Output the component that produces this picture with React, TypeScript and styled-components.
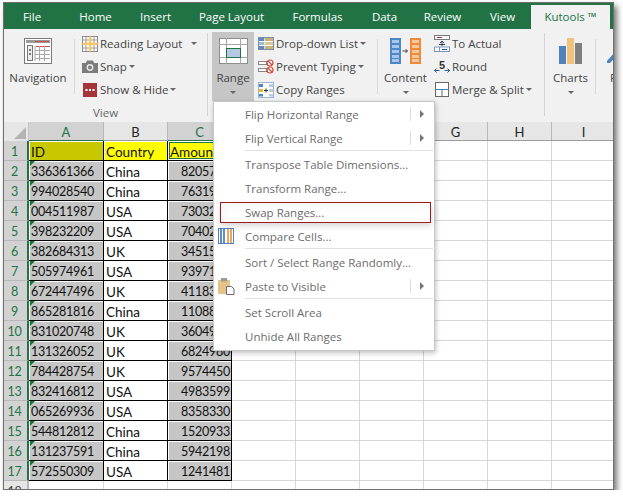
import React from "react";
import styled, { createGlobalStyle } from "styled-components";

const GlobalStyle = createGlobalStyle`
  html, body { margin: 0; padding: 0; background: #fff; }
  * { box-sizing: border-box; }
`;

const UI_FONT = `"Open Sans", "Liberation Sans", sans-serif`;
const CELL_FONT = `Lato, "Liberation Sans", sans-serif`;
const GREEN = "#217346";

const Win = styled.div`
  position: relative;
  margin: 2px 0 0 3px;
  width: 611px;
  height: 488px;
  border: 1px solid #6f6f6f;
  background: #fff;
  box-shadow: 3px 4px 6px rgba(0, 0, 0, 0.55);
  font-family: ${UI_FONT};
`;

const TabBar = styled.div`
  display: flex;
  height: 26px;
  background: ${GREEN};
  overflow: hidden;
`;

const Tab = styled.div<{ $w: number; $ml?: number; $active?: boolean }>`
  width: ${(p) => p.$w}px;
  margin-left: ${(p) => p.$ml ?? 0}px;
  margin-top: ${(p) => (p.$active ? 2 : 0)}px;
  display: flex;
  align-items: center;
  justify-content: center;
  font-size: 11.5px;
  padding-bottom: ${(p) => (p.$active ? 2 : 0)}px;
  color: ${(p) => (p.$active ? GREEN : "#fff")};
  background: ${(p) => (p.$active ? "#f1f1f1" : "transparent")};
  white-space: nowrap;
`;

const Ribbon = styled.div`
  display: flex;
  height: 93px;
  background: #f1f1f1;
  color: #444;
  font-size: 11.5px;
  overflow: hidden;
`;

const Group = styled.div<{ $w: number }>`
  flex: none;
  width: ${(p) => p.$w}px;
  display: flex;
  flex-direction: column;
  padding-top: 3px;
`;

const Controls = styled.div`
  display: flex;
  height: 69px;
`;

const GroupLabel = styled.div`
  margin-top: 4px;
  height: 16px;
  line-height: 16px;
  text-align: center;
  color: #666;
`;

const GroupDivider = styled.div`
  flex: none;
  width: 1px;
  height: 83px;
  margin-top: 4px;
  background: #d4d4d4;
`;

const ShortDivider = styled.div<{ $mr?: number; $ml?: number }>`
  flex: none;
  width: 1px;
  height: 55px;
  margin: 7px ${(p) => p.$mr ?? 0}px 0 ${(p) => p.$ml ?? 0}px;
  background: #d8d8d8;
`;

const LargeButton = styled.div<{ $w: number; $ml?: number; $active?: boolean }>`
  flex: none;
  width: ${(p) => p.$w}px;
  margin-left: ${(p) => p.$ml ?? 0}px;
  display: flex;
  flex-direction: column;
  align-items: center;
  padding-top: 6px;
  background: ${(p) => (p.$active ? "#c6c6c6" : "transparent")};
  white-space: nowrap;
`;

const LargeIcon = styled.div`
  height: 26px;
  display: flex;
  justify-content: center;
`;

const LargeLabel = styled.div`
  margin-top: 6px;
  height: 16px;
  line-height: 16px;
`;

const Caret = styled.span<{ $ml?: number }>`
  display: inline-block;
  flex: none;
  width: 0;
  height: 0;
  margin-left: ${(p) => p.$ml ?? 0}px;
  border-left: 3px solid transparent;
  border-right: 3px solid transparent;
  border-top: 3px solid #666;
`;

const LargeCaret = styled(Caret)`
  margin-top: 5px;
`;

const SmallColumn = styled.div<{ $w: number; $ml?: number }>`
  flex: none;
  width: ${(p) => p.$w}px;
  margin-left: ${(p) => p.$ml ?? 0}px;
  display: flex;
  flex-direction: column;
`;

const SmallItem = styled.div`
  height: 23px;
  display: flex;
  align-items: center;
  white-space: nowrap;
`;

const SmallIcon = styled.span`
  flex: none;
  width: 17px;
  height: 18px;
  margin-right: 2px;
  display: flex;
  align-items: center;
  justify-content: center;
`;

const Sheet = styled.div`
  display: grid;
  grid-template-columns: 25px 75px repeat(8, 64px);
  grid-template-rows: 19px;
  grid-auto-rows: 20px;
  height: 367px;
  overflow: hidden;
  font-family: ${CELL_FONT};
  font-size: 13.5px;
`;

const Corner = styled.div`
  position: relative;
  background: #e6e6e6;
  border-right: 1px solid #c6c6c6;
  &::after {
    content: "";
    position: absolute;
    right: 2px;
    bottom: 2px;
    width: 0;
    height: 0;
    border-left: 12px solid transparent;
    border-bottom: 12px solid #b4b4b4;
  }
`;

const ColHead = styled.div<{ $on?: boolean }>`
  display: flex;
  align-items: center;
  justify-content: center;
  padding-top: 1px;
  font-size: 13px;
  color: ${(p) => (p.$on ? GREEN : "#222")};
  background: ${(p) => (p.$on ? "#d2d2d2" : "#e6e6e6")};
  border-right: 1px solid #b8b8b8;
  border-bottom: 1px solid ${(p) => (p.$on ? GREEN : "#9c9c9c")};
`;

const RowHead = styled.div<{ $on?: boolean }>`
  display: flex;
  align-items: center;
  justify-content: center;
  padding: 2px 2px 0 0;
  font-size: 12.5px;
  letter-spacing: -0.25px;
  color: ${(p) => (p.$on ? GREEN : "#444")};
  background: ${(p) => (p.$on ? "#d2d2d2" : "#e6e6e6")};
  border-right: 2px solid ${(p) => (p.$on ? GREEN : "#b8b8b8")};
  border-bottom: 1px solid #b8b8b8;
`;

const Cell = styled.div<{
  $fill?: string;
  $table?: boolean;
  $digits?: boolean;
  $right?: boolean;
  $flag?: boolean;
  $current?: boolean;
}>`
  position: relative;
  display: flex;
  align-items: center;
  justify-content: ${(p) => (p.$right ? "flex-end" : "flex-start")};
  padding: 2px 1px 0 2px;
  color: #111;
  font-size: ${(p) => (p.$digits ? 12.5 : 13.5)}px;
  letter-spacing: ${(p) => (p.$digits ? "-0.25px" : "0")};
  white-space: nowrap;
  overflow: hidden;
  background: ${(p) => p.$fill ?? "#fff"};
  border-right: 1px solid ${(p) => (p.$table ? "#000" : "#d6d6d6")};
  border-bottom: 1px solid ${(p) => (p.$table ? "#000" : "#d6d6d6")};
  box-shadow: ${(p) => (p.$current ? `inset 0 0 0 1px #fff, inset 0 0 0 2px ${GREEN}` : p.$fill ? "inset 1px 1px 0 #fff" : "none")};
  &::before {
    content: "";
    display: ${(p) => (p.$flag ? "block" : "none")};
    position: absolute;
    left: 1px;
    top: 0;
    width: 0;
    height: 0;
    border-top: 5px solid #0f7a2c;
    border-right: 5px solid transparent;
  }
`;

const Menu = styled.div`
  position: absolute;
  left: 209px;
  top: 98px;
  width: 222px;
  height: 250px;
  background: #fff;
  border: 1px solid #c8c8c8;
  box-shadow: 1px 2px 5px rgba(0, 0, 0, 0.25);
  color: #6d6d6d;
  font-size: 11.5px;
`;

const MenuItem = styled.div<{ $marked?: boolean }>`
  position: relative;
  height: 24px;
  display: flex;
  align-items: center;
  white-space: nowrap;
  &::after {
    content: "";
    display: ${(p) => (p.$marked ? "block" : "none")};
    position: absolute;
    left: 6px;
    right: 3px;
    top: 2px;
    bottom: 1px;
    border: 1px solid #9b1b1f;
    box-shadow: 0 3px 6px rgba(0, 0, 0, 0.16), inset 4px 4px 8px rgba(0, 0, 0, 0.04);
  }
`;

const MenuIcon = styled.span`
  flex: none;
  width: 31px;
  padding-left: 4px;
  display: flex;
  align-items: center;
`;

const MenuSep = styled.div`
  height: 2px;
  margin-left: 31px;
  margin-right: 1px;
  border-top: 1px solid #e2e2e2;
`;

const Sub = styled.span`
  margin-left: auto;
  width: 24px;
  height: 14px;
  display: flex;
  align-items: center;
  padding-left: 9px;
  border-left: 1px solid #dcdcdc;
  &::after {
    content: "";
    width: 0;
    height: 0;
    border-top: 4px solid transparent;
    border-bottom: 4px solid transparent;
    border-left: 4px solid #777;
  }
`;

const NavigationIcon = () => (
  <svg width="29" height="26" viewBox="0 0 29 26">
    <rect x="0.5" y="0.5" width="27" height="25" fill="#fff" stroke="#7a7a7a" />
    <rect x="2" y="2" width="24" height="3" fill="#9a9a9a" />
    <path d="M11 3.5h14M12 8.5h14" stroke="#c8504a" />
    <path d="M11 12.5h15M11 16.5h15M11 20.5h15M15.5 8v15M20.5 8v15M11 8v15" stroke="#a8a8a8" />
    <rect x="3.5" y="7.5" width="5" height="15" fill="#eee" stroke="#777" />
    <rect x="5" y="11" width="2" height="2" fill="#777" />
    <rect x="5" y="15" width="2" height="2" fill="#777" />
  </svg>
);

const ReadingIcon = () => (
  <svg width="16" height="16" viewBox="0 0 16 16">
    <rect x="0.5" y="0.5" width="15" height="15" fill="#fff" stroke="#8a8a8a" />
    <path d="M4 0v16M12 0v16M0 4h16M0 12h16" stroke="#9a9a9a" />
    <rect x="7" y="0.5" width="2.4" height="15" fill="#f6c667" />
    <rect x="0.5" y="6.6" width="15" height="2.4" fill="#f6c667" />
  </svg>
);

const CameraIcon = () => (
  <svg width="16" height="13" viewBox="0 0 16 13">
    <path d="M0 3h4l1-2.5h6L12 3h4v10H0z" fill="#7c7c7c" />
    <circle cx="8" cy="7.5" r="3.4" fill="#e8e8e8" />
    <circle cx="8" cy="7.5" r="2" fill="#7c7c7c" />
  </svg>
);

const ShowHideIcon = () => (
  <svg width="14" height="14" viewBox="0 0 14 14">
    <rect width="14" height="14" fill="#a4343a" />
    <rect x="2.5" y="6" width="2" height="2" fill="#fff" />
    <rect x="6" y="6" width="2" height="2" fill="#fff" />
    <rect x="9.5" y="6" width="2" height="2" fill="#fff" />
  </svg>
);

const RangeIcon = () => (
  <svg width="29" height="26" viewBox="0 0 29 26">
    <rect x="0.5" y="0.5" width="28" height="25" fill="#fff" stroke="#8c8c8c" />
    <path d="M0 6.5h29M0 19.5h29M7.5 0v26M21.5 0v26" stroke="#a6a6a6" />
    <rect x="7.5" y="10.5" width="14" height="9" fill="#b4c9e2" stroke="#217346" />
  </svg>
);

const DropDownIcon = () => (
  <svg width="16" height="13" viewBox="0 0 16 13">
    <rect x="0.5" y="0.5" width="15" height="12" fill="#fff" stroke="#7a8ea8" />
    <rect x="1" y="1" width="5" height="3" fill="#5b8bc4" />
    <rect x="6.5" y="1" width="8.5" height="3" fill="#c9b27c" />
    <rect x="1" y="5" width="5" height="3" fill="#9dbbdd" />
    <rect x="6.5" y="5" width="8.5" height="3" fill="#d8c99d" />
    <rect x="1" y="9" width="5" height="3" fill="#5b8bc4" />
    <rect x="6.5" y="9" width="8.5" height="3" fill="#c9b27c" />
  </svg>
);

const PreventIcon = () => (
  <svg width="16" height="15" viewBox="0 0 16 15">
    <rect x="0.5" y="2.5" width="8" height="3" fill="#fff" stroke="#888" />
    <rect x="0.5" y="9.5" width="8" height="3" fill="#fff" stroke="#888" />
    <circle cx="12" cy="4" r="3" fill="#fff" stroke="#cf4a3c" strokeWidth="1.2" />
    <path d="M10 2l4 4" stroke="#cf4a3c" strokeWidth="1.2" />
    <circle cx="12" cy="11" r="3" fill="#fff" stroke="#cf4a3c" strokeWidth="1.2" />
    <path d="M10 9l4 4" stroke="#cf4a3c" strokeWidth="1.2" />
  </svg>
);

const CopyRangesIcon = () => (
  <svg width="16" height="16" viewBox="0 0 16 16">
    <rect x="0.5" y="0.5" width="15" height="15" fill="#fff" stroke="#9cb3cf" />
    <rect x="1" y="2" width="4" height="3" fill="#4f86c6" />
    <rect x="1" y="7" width="4" height="3" fill="#f0b429" />
    <rect x="1" y="12" width="4" height="2.5" fill="#4f86c6" />
    <rect x="11" y="2" width="4" height="3" fill="#b6cbe4" />
    <rect x="11" y="7" width="4" height="3" fill="#b6cbe4" />
    <rect x="11" y="12" width="4" height="2.5" fill="#b6cbe4" />
    <path d="M6 8.5h4M8 6.5v4" stroke="#333" />
  </svg>
);

const ContentIcon = () => (
  <svg width="31" height="26" viewBox="0 0 31 26">
    <rect width="11" height="26" fill="#4f86c6" />
    <rect x="20" width="11" height="26" fill="#ed8b3a" />
    {[2, 7, 12, 17, 21].map((y) => (
      <React.Fragment key={y}>
        <rect x="2" y={y} width="7" height="3" fill="#a9c6e8" />
        <rect x="22" y={y} width="7" height="3" fill="#f7c79d" />
      </React.Fragment>
    ))}
    <path d="M12.5 13h5M15.5 11l2 2-2 2" fill="none" stroke="#444" />
  </svg>
);

const ToActualIcon = () => (
  <svg width="16" height="17" viewBox="0 0 16 17">
    <rect x="0.5" y="0.5" width="15" height="4" fill="#fff" stroke="#7a7a7a" />
    <path d="M3 2.5h5" stroke="#b3312c" />
    <path d="M8 6v5M6 8l2-2 2 2M5 9.5h6" fill="none" stroke="#345" />
    <rect x="0.5" y="12" width="15" height="4.5" fill="#fff" stroke="#7c97bb" />
    <path d="M8 14.5h5" stroke="#2457b3" />
    <path d="M5.5 12v4.5" stroke="#7c97bb" />
  </svg>
);

const RoundIcon = () => (
  <svg width="16" height="15" viewBox="0 0 16 15">
    <text x="5" y="9.5" fontSize="11" fontWeight="700" fontFamily="Liberation Sans, sans-serif" fill="#333">
      5
    </text>
    <path d="M0.5 11.5h5M2.5 9.5l-2 2 2 2M10.5 11.5h5M13.5 9.5l2 2-2 2" fill="none" stroke="#2f5f97" />
  </svg>
);

const MergeIcon = () => (
  <svg width="14" height="15" viewBox="0 0 14 15">
    <rect x="0.5" y="0.5" width="13" height="14" fill="#fff" stroke="#666" />
    <path d="M0 7.5h14" stroke="#3f7fc1" />
    <path d="M7 8v7" stroke="#666" />
  </svg>
);

const ChartsIcon = () => (
  <svg width="23" height="26" viewBox="0 0 23 26">
    <rect y="8" width="7" height="18" fill="#4f81bd" />
    <rect x="8" width="7" height="26" fill="#f0c27b" />
    <rect x="16" y="5" width="7" height="21" fill="#7f7f7f" />
  </svg>
);

const PencilIcon = () => (
  <svg width="12" height="26" viewBox="0 0 12 26">
    <path d="M0 23l8-9 3 2-8 9H0z" fill="#4f81bd" />
  </svg>
);

const CompareIcon = () => (
  <svg width="16" height="16" viewBox="0 0 16 16">
    <rect x="0.5" y="0.5" width="15" height="15" fill="#fff" stroke="#4f81bd" />
    <rect x="2" y="1" width="5" height="14" fill="#5b8fca" />
    <rect x="9" y="1" width="5" height="14" fill="#f2a65a" />
    <path d="M4.5 1v14M11.5 1v14" stroke="#fff" />
  </svg>
);

const PasteIcon = () => (
  <svg width="17" height="17" viewBox="0 0 17 17">
    <rect y="2" width="12" height="14" fill="#e6c489" />
    <rect x="3" y="0" width="6" height="3.5" fill="#9a9a9a" />
    <path d="M8.5 8.5h5l2.5 2.5v5.5H8.5z" fill="#fff" stroke="#6a6a6a" />
  </svg>
);

const TABS: { name: string; w: number; ml?: number; active?: boolean }[] = [
  { name: "File", w: 56 },
  { name: "Home", w: 71 },
  { name: "Insert", w: 49 },
  { name: "Page Layout", w: 103 },
  { name: "Formulas", w: 69 },
  { name: "Data", w: 65 },
  { name: "Review", w: 51 },
  { name: "View", w: 51, ml: 9 },
  { name: "Kutools ™", w: 79, ml: 3, active: true },
];

const ROWS: [string, string, string][] = [
  ["336361366", "China", "8205712"],
  ["994028540", "China", "7631940"],
  ["004511987", "USA", "7303285"],
  ["398232209", "USA", "7040216"],
  ["382684313", "UK", "3451577"],
  ["505974961", "USA", "9397134"],
  ["672447496", "UK", "4118362"],
  ["865281816", "China", "1108849"],
  ["831020748", "UK", "3604951"],
  ["131326052", "UK", "6824980"],
  ["784428754", "UK", "9574450"],
  ["832416812", "USA", "4983599"],
  ["065269936", "USA", "8358330"],
  ["544812812", "China", "1520933"],
  ["131237591", "China", "5942198"],
  ["572550309", "USA", "1241481"],
];

const COLS = ["A", "B", "C", "D", "E", "F", "G", "H", "I"];
const SELECTED = ["A", "C"];
const BLANKS = [0, 1, 2, 3, 4, 5];

const App: React.FC = () => (
  <>
    <GlobalStyle />
    <Win>
      <TabBar>
        {TABS.map((t) => (
          <Tab key={t.name} $w={t.w} $ml={t.ml} $active={t.active}>
            {t.name}
          </Tab>
        ))}
      </TabBar>

      <Ribbon>
        <Group $w={203}>
          <Controls>
            <LargeButton $w={68}>
              <LargeIcon><NavigationIcon /></LargeIcon>
              <LargeLabel>Navigation</LargeLabel>
            </LargeButton>
            <ShortDivider $ml={2} />
            <SmallColumn $w={126} $ml={6}>
              <SmallItem><SmallIcon><ReadingIcon /></SmallIcon>Reading Layout<Caret $ml={9} /></SmallItem>
              <SmallItem><SmallIcon><CameraIcon /></SmallIcon>Snap<Caret $ml={2} /></SmallItem>
              <SmallItem><SmallIcon><ShowHideIcon /></SmallIcon>Show &amp; Hide<Caret $ml={2} /></SmallItem>
            </SmallColumn>
          </Controls>
          <GroupLabel>View</GroupLabel>
        </Group>
        <GroupDivider />
        <Group $w={336}>
          <Controls>
            <LargeButton $w={42} $ml={4} $active>
              <LargeIcon><RangeIcon /></LargeIcon>
              <LargeLabel>Range</LargeLabel>
              <LargeCaret />
            </LargeButton>
            <SmallColumn $w={120} $ml={3}>
              <SmallItem><SmallIcon><DropDownIcon /></SmallIcon>Drop-down List<Caret $ml={2} /></SmallItem>
              <SmallItem><SmallIcon><PreventIcon /></SmallIcon>Prevent Typing<Caret $ml={2} /></SmallItem>
              <SmallItem><SmallIcon><CopyRangesIcon /></SmallIcon>Copy Ranges</SmallItem>
            </SmallColumn>
            <ShortDivider />
            <LargeButton $w={47} $ml={4}>
              <LargeIcon><ContentIcon /></LargeIcon>
              <LargeLabel>Content</LargeLabel>
              <LargeCaret />
            </LargeButton>
            <SmallColumn $w={111} $ml={4}>
              <SmallItem><SmallIcon><ToActualIcon /></SmallIcon>To Actual</SmallItem>
              <SmallItem><SmallIcon><RoundIcon /></SmallIcon>Round</SmallItem>
              <SmallItem><SmallIcon><MergeIcon /></SmallIcon>Merge &amp; Split<Caret $ml={2} /></SmallItem>
            </SmallColumn>
          </Controls>
          <GroupLabel>Ranges &amp; Cells</GroupLabel>
        </Group>
        <GroupDivider />
        <Group $w={68}>
          <Controls>
            <LargeButton $w={47} $ml={2}>
              <LargeIcon><ChartsIcon /></LargeIcon>
              <LargeLabel>Charts</LargeLabel>
              <LargeCaret />
            </LargeButton>
            <ShortDivider $mr={11} $ml={1} />
            <LargeButton $w={12}>
              <LargeIcon><PencilIcon /></LargeIcon>
              <LargeLabel>F</LargeLabel>
            </LargeButton>
          </Controls>
        </Group>
      </Ribbon>

      <Sheet>
        <Corner />
        {COLS.map((c) => (
          <ColHead key={c} $on={SELECTED.includes(c)}>{c}</ColHead>
        ))}

        <RowHead $on>1</RowHead>
        <Cell $table $fill="#c8c800">ID</Cell>
        <Cell $table $fill="#ffff00">Country</Cell>
        <Cell $table $fill="#ffff00" $current>Amount</Cell>
        {BLANKS.map((b) => <Cell key={b} />)}

        {ROWS.map(([id, country, amount], i) => (
          <React.Fragment key={id}>
            <RowHead $on>{i + 2}</RowHead>
            <Cell $table $digits $flag $fill="#c6c6c6">{id}</Cell>
            <Cell $table>{country}</Cell>
            <Cell $table $digits $right $fill="#c6c6c6">{amount}</Cell>
            {BLANKS.map((b) => <Cell key={b} />)}
          </React.Fragment>
        ))}

        <RowHead>18</RowHead>
        {COLS.map((c) => <Cell key={c} />)}
      </Sheet>

      <Menu>
        <MenuItem><MenuIcon />Flip Horizontal Range<Sub /></MenuItem>
        <MenuItem><MenuIcon />Flip Vertical Range<Sub /></MenuItem>
        <MenuSep />
        <MenuItem><MenuIcon />Transpose Table Dimensions...</MenuItem>
        <MenuItem><MenuIcon />Transform Range...</MenuItem>
        <MenuItem $marked><MenuIcon />Swap Ranges...</MenuItem>
        <MenuItem><MenuIcon><CompareIcon /></MenuIcon>Compare Cells...</MenuItem>
        <MenuSep />
        <MenuItem><MenuIcon />Sort / Select Range Randomly...</MenuItem>
        <MenuItem><MenuIcon><PasteIcon /></MenuIcon>Paste to Visible<Sub /></MenuItem>
        <MenuSep />
        <MenuItem><MenuIcon />Set Scroll Area</MenuItem>
        <MenuItem><MenuIcon />Unhide All Ranges</MenuItem>
      </Menu>
    </Win>
  </>
);

export default App;
